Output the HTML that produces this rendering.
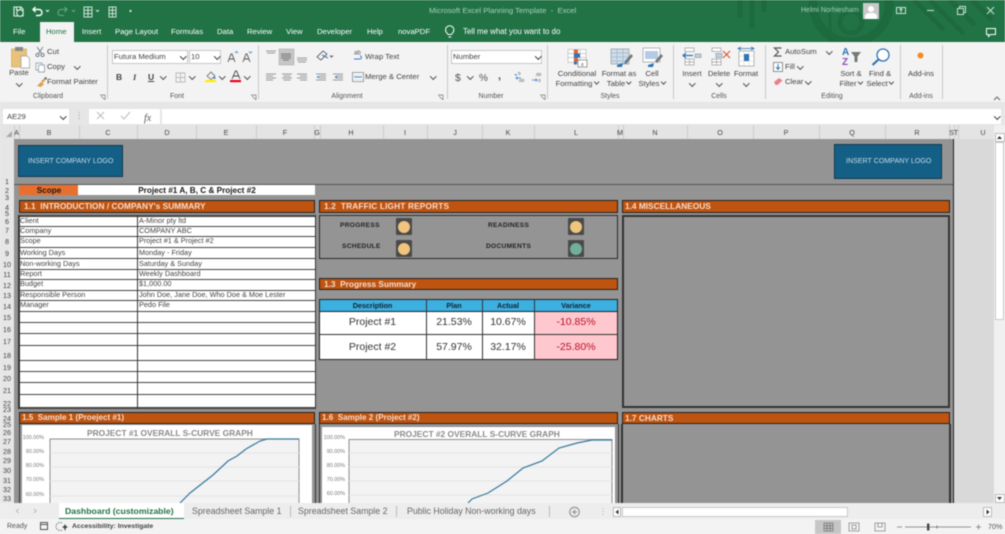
<!DOCTYPE html>
<html><head><meta charset="utf-8"><title>Microsoft Excel Planning Template - Excel</title>
<style>
html,body{margin:0;padding:0}
body{width:1005px;height:534px;overflow:hidden;position:relative;background:#f3f3f3;font-family:"Liberation Sans",sans-serif;filter:blur(.4px)}
div,svg{position:absolute}
.t{position:absolute;white-space:nowrap;font-size:7.7px;line-height:10px;color:#444}
.c{transform:translateX(-50%)}
.w{color:#fff}
.g{font-size:7px;color:#555}
.sep{width:1px;top:45px;height:54px;background:#c9c9c9}
.ch{position:absolute;font-size:0;width:3.500px;height:3.500px;border-right:1px solid #555;border-bottom:1px solid #555;transform:rotate(45deg)}
.ci{display:inline-block;width:3px;height:3px;border-right:.8px solid #555;border-bottom:.8px solid #555;transform:rotate(45deg);margin:0 0 2px 2px}
.col{top:125px;height:14px;width:1px;background:#ccc}
.cl{position:absolute;top:128px;font-size:7.2px;line-height:9px;color:#444;transform:translateX(-50%)}
.rl{position:absolute;left:0;width:14px;text-align:center;font-size:7.2px;line-height:9px;color:#444}
.bar{background:#bf5310;border:1px solid #222;box-sizing:border-box;color:#f5ddcb;font-weight:bold;font-size:8.3px;line-height:10px;white-space:nowrap}
.hl{left:19px;width:296px;height:1px;background:#444}
.cell{position:absolute;white-space:nowrap;font-size:7.3px;line-height:10px;color:#444}
.lab{position:absolute;white-space:nowrap;font-size:6.6px;font-weight:bold;line-height:8px;color:#222;letter-spacing:.3px}
.lt{width:16px;height:17px;background:#4a4a4a;border-radius:1px}
.lt i{position:absolute;left:2px;top:2.5px;width:12px;height:12px;border-radius:50%;background:#eec47e}
.tt{position:absolute;white-space:nowrap;text-align:center;font-size:10.5px;line-height:12px;color:#333}
.ttc{position:absolute;white-space:nowrap;font-weight:bold;font-size:7.2px;line-height:9px;color:#123;text-align:center}
.yl{position:absolute;font-size:5.4px;line-height:7px;color:#777;text-align:right;white-space:nowrap}
.ct{position:absolute;white-space:nowrap;font-weight:bold;font-size:8.4px;line-height:10px;color:#8a8a8a}
.tab{position:absolute;top:505px;font-size:8.8px;line-height:12px;color:#666;white-space:nowrap}
</style></head><body>

<!-- title bar -->
<div style="left:0;top:0;width:1005px;height:42px;background:#217346"></div>
<svg style="left:0;top:0" width="1005" height="42" viewBox="0 0 1005 42" fill="none">
<g stroke="#1d6a3f" stroke-width="5">
<circle cx="851" cy="4" r="38" stroke-width="9"/>
<circle cx="851" cy="22" r="11" stroke-width="5"/>
<path d="M740 0v18M752 0v28M764 0v12M914 0l30 30M930 0l34 34M950 0l25 25M972 0l20 20"/>
<path d="M830 8v34M816 0v14" stroke-width="3"/>
</g>
<g stroke="#e6efe9" stroke-width="1.1" fill="none">
<path d="M14 7h7l2 2v7h-9zM16.500 7v3h4V7"/><circle cx="20" cy="13" r="3.300" fill="#217346"/>
<path d="M33 9.500h6a3 3 0 0 1 0 6h-3M35.500 7l-2.500 2.500 2.500 2.500" stroke="#fff" stroke-width="1.400"/>
<path d="M46 10l1.500 1.500L49 10"/>
</g>
<g stroke="#6ba584" stroke-width="1.1" fill="none">
<path d="M67 9.500h-6a3 3 0 0 0 0 6h3M64.500 7l2.500 2.500L64.500 12"/>
<path d="M72 10l1.500 1.500L75 10"/>
</g>
<g stroke="#cfe2d7" stroke-width="1" fill="none">
<path d="M84 7h8v10h-8zM84 10.300h8M84 13.600h8M88 7v10"/>
<path d="M96 10l1.500 1.500L99 10"/>
<path d="M109 7h7v10h-7zM109 10.300h7M109 13.600h7M112.500 7v10"/>
</g>
<rect x="129.500" y="10" width="2" height="2" fill="#cfe2d7"/>
<g stroke="#fff" stroke-width="1" fill="none"><path d="M448 34.500c-1-1.500-2.500-2.500-2.500-4.500a4.200 4.200 0 0 1 8.400 0c0 2-1.500 3-2.500 4.500zM448.500 37h2.800"/></g>
<g stroke="#c8dfd1" stroke-width="1" fill="none">
<rect x="896.500" y="7.500" width="9" height="6"/><path d="M901 12.500v-4M899.500 10l1.500-1.500 1.500 1.500"/>
<path d="M927 10.500h7"/>
<rect x="957.500" y="8.500" width="6" height="6"/><path d="M959.500 8.500v-2h6v6h-2"/>
<path d="M987 7l7 7M994 7l-7 7"/>
<path d="M986.500 28.500h9v6h-5l-2 2v-2h-2z" stroke="#fff"/>
</g>
</svg>
<div class="t" style="left:429px;top:6px;color:#a9cfb9">Microsoft Excel Planning Template &nbsp;-&nbsp; Excel</div>
<div class="t" style="left:801px;top:6px;color:#a9cfb9;font-size:7px">Helmi Norhiesham</div>
<div style="left:863px;top:3px;width:16px;height:16px;background:#c9c9c9;overflow:hidden">
 <div style="left:5px;top:3px;width:6px;height:6px;border-radius:50%;background:#fff"></div>
 <div style="left:2px;top:10px;width:12px;height:7px;border-radius:4px 4px 0 0;background:#fff"></div>
</div>

<!-- tabs -->
<div style="left:40px;top:22px;width:34px;height:21px;background:#f3f3f3"></div>
<div class="t w" style="left:13px;top:27px">File</div>
<div class="t" style="left:46px;top:27px;color:#217346">Home</div>
<div class="t w" style="left:82px;top:27px">Insert</div>
<div class="t w" style="left:115px;top:27px">Page Layout</div>
<div class="t w" style="left:171px;top:27px">Formulas</div>
<div class="t w" style="left:217px;top:27px">Data</div>
<div class="t w" style="left:247px;top:27px">Review</div>
<div class="t w" style="left:286px;top:27px">View</div>
<div class="t w" style="left:317px;top:27px">Developer</div>
<div class="t w" style="left:367px;top:27px">Help</div>
<div class="t w" style="left:398px;top:27px">novaPDF</div>
<div class="t w" style="left:463px;top:27px;font-size:7.9px">Tell me what you want to do</div>

<!-- ribbon -->
<div style="left:0;top:42px;width:1005px;height:60px;background:#f3f3f3"></div>
<div class="sep" style="left:107px"></div><div class="sep" style="left:258px"></div><div class="sep" style="left:447px"></div><div class="sep" style="left:547px"></div><div class="sep" style="left:673px"></div><div class="sep" style="left:765px"></div><div class="sep" style="left:900px"></div><div class="sep" style="left:942px"></div>

<svg style="left:0;top:42px" width="1005" height="60" viewBox="0 42 1005 60" fill="none">
<rect x="11.500" y="49" width="15" height="18" fill="#e8c27a" stroke="#c9a45e" stroke-width=".6"/><rect x="15" y="47" width="8" height="4" fill="#888"/>
<path d="M21 56h6l2.500 2.500V68H21z" fill="#fff" stroke="#999" stroke-width=".7"/>
<g stroke="#6a7a8a" stroke-width=".9"><path d="M37 47l5 7M43 47l-5 7"/><circle cx="37.500" cy="55" r="1.600"/><circle cx="42.500" cy="55" r="1.600"/></g>
<g stroke="#8a97a5" stroke-width=".8" fill="#fff"><rect x="36" y="63" width="6" height="7"/><rect x="38.500" y="65" width="6" height="7"/></g>
<path d="M37 86l4-4 3 2-3 3zM41 81l4-3 1 1-3 4z" fill="#d9a24c"/><path d="M44 78l2-1 1 1-1 2z" fill="#666"/>
<path d="M228 62l3-8h1l3 8M229.500 59h4" stroke="#555" stroke-width=".9"/><path d="M235 53l1.500-1.500L238 53" stroke="#2f7ed0" stroke-width=".8"/>
<path d="M243 62l3-8h1l3 8M244.500 59h4" stroke="#555" stroke-width=".9"/><path d="M249 51.500l1.500 1.500 1.500-1.500" stroke="#2f7ed0" stroke-width=".8"/>
<g stroke="#bbb" stroke-width=".9"><path d="M176 73h9v9h-9zM180.500 73v9M176 77.500h9"/></g>
<path d="M207 76l4-4 4 4-4 3.500z" fill="#eee" stroke="#666" stroke-width=".8"/><circle cx="214.500" cy="78" r="1" fill="#2e75b6"/>
<rect x="205" y="80" width="11" height="2.200" fill="#ffee00"/>
<path d="M232 79l3.500-8h1L240 79M233.500 76h5" stroke="#444" stroke-width=".9"/><rect x="230" y="80" width="11" height="2.200" fill="#e8001c"/>
<rect x="279" y="49" width="15" height="16" fill="#c6c6c6" stroke="#b0b0b0" stroke-width=".6"/>
<g stroke="#999" stroke-width="1">
<path d="M266 51h10M267 53h8"/>
<path d="M281 54h10M281 56h10M281 58h10M283 60h6" stroke="#777"/>
<path d="M297 58h10M297 60h10M298 62h8"/>
<path d="M266 74h10M266 76h7M266 78h10M266 80h7"/>
<path d="M282 74h10M283.500 76h7M282 78h10M283.500 80h7"/>
<path d="M297 74h10M300 76h7M297 78h10M300 80h7"/>
<path d="M316 74h10M319 76h7M319 78h7M316 80h10M333 74h10M336 76h7M336 78h7M333 80h10"/>
</g>
<path d="M317 77h2M335 77h2" stroke="#2f7ed0" stroke-width="1.400"/>
<path d="M317 57l6-6 4 3-6 6z" stroke="#666" stroke-width=".9"/><path d="M322 55l6 3" stroke="#2f7ed0"/>
<path d="M330 55.500l1.500 1.500 1.500-1.500" stroke="#555"/>
<path d="M354 59h6a1.500 1.500 0 0 0 0-3" stroke="#2f7ed0" stroke-width=".9"/>
<text x="354" y="54.500" font-family="Liberation Sans" font-size="6" fill="#555">ab</text>
<rect x="352.500" y="72.500" width="11" height="9" stroke="#888" stroke-width=".8" fill="#fff"/><path d="M354 77h8" stroke="#2f7ed0"/><path d="M352.500 75h11M352.500 79.500h11" stroke="#bbb" stroke-width=".6"/>
<text x="455" y="81" font-family="Liberation Sans" font-size="10.500" fill="#555">$</text>
<text x="479" y="81" font-family="Liberation Sans" font-size="10" fill="#555">%</text>
<text x="498" y="79" font-family="Liberation Sans" font-size="11" font-weight="bold" fill="#555">,</text>
<rect x="515" y="74" width="1.500" height="1.500" fill="#2f7ed0"/><path d="M516 78h5M517.500 76.500L516 78l1.500 1.500" stroke="#2f7ed0" stroke-width=".7"/>
<text x="518" y="75" font-family="Liberation Sans" font-size="4.500" fill="#555">0</text><text x="518" y="82" font-family="Liberation Sans" font-size="4.500" fill="#555">.00</text>
<path d="M532 80h5M535.500 78.500L537 80l-1.500 1.500" stroke="#2f7ed0" stroke-width=".7"/>
<text x="535" y="76" font-family="Liberation Sans" font-size="4.500" fill="#555">.00</text><text x="537" y="82" font-family="Liberation Sans" font-size="4.500" fill="#555">.0</text>
<path d="M568 49.500h18v13h-18zM568 53.500h18M568 57.500h18M574 49.500v13M580 49.500v13" stroke="#bbb" stroke-width=".7" fill="#fff"/>
<rect x="574" y="49.500" width="4" height="4" fill="#d9663a"/><rect x="574" y="53.500" width="6" height="4" fill="#2e75b6"/><rect x="574" y="57.500" width="4" height="4" fill="#d9663a"/><rect x="574" y="61.500" width="3" height="3" fill="#2e75b6"/>
<rect x="578" y="60" width="9" height="7" fill="#fff" stroke="#777" stroke-width=".7"/>
<text x="581" y="66" font-family="Liberation Serif" font-style="italic" font-size="6" fill="#444">x</text>
<path d="M611 49h18v15h-18z" fill="#cfdcee" stroke="#999" stroke-width=".7"/>
<path d="M611 53h18M611 57h18M611 61h18M617 49v15M623 49v15" stroke="#8aa" stroke-width=".5"/>
<path d="M617 65l6-2-1 4h-5zM624 63l7-8 1 1-6 8z" fill="#2e75b6"/><path d="M625 61l6-7 2 2-6 7z" fill="#777"/>
<rect x="643" y="48" width="17" height="14" fill="#fff" stroke="#999" stroke-width=".7"/><rect x="645" y="51" width="13" height="8" fill="#b4cbe6"/>
<path d="M648 65l6-2-1 4h-5z" fill="#2e75b6"/><path d="M655 61l6-7 2 2-6 7z" fill="#777"/>
<g stroke="#999" stroke-width=".7" fill="#fff">
<rect x="685" y="48" width="9" height="3.500"/><rect x="685" y="59" width="9" height="6"/><path d="M689.500 59v6M685 62h9"/>
<rect x="695" y="54" width="6" height="3.500" fill="#bcd2e8"/>
<rect x="712" y="48" width="9" height="3.500"/><rect x="712" y="59" width="9" height="6"/><path d="M716.500 59v6M712 62h9"/>
<rect x="716" y="53.500" width="6" height="4" fill="#bcd2e8"/>
</g>
<path d="M683 55.500h10M686 53l-3 2.500 3 2.500" stroke="#2e75b6" stroke-width="1.200"/>
<path d="M723 51l7 7M730 51l-7 7" stroke="#d8532f" stroke-width="1.100"/>
<rect x="739" y="51" width="15" height="15" fill="#fff" stroke="#999" stroke-width=".7"/><path d="M739 56h15M739 61h15M744 51v15M749 51v15" stroke="#ccc" stroke-width=".5"/><rect x="744" y="54" width="5" height="7" fill="#2e75b6"/>
<path d="M738 48.500h16M741 47l-3 1.500 3 1.500M751 47l3 1.500-3 1.500" stroke="#2e75b6" stroke-width=".8"/>
<path d="M781.500 48h-7l4 4-4 4h7" stroke="#555" stroke-width="1.200"/>
<rect x="773.500" y="62.500" width="9" height="9" fill="#fff" stroke="#777" stroke-width=".8"/><path d="M778 64v5M776 67l2 2.500 2-2.500" stroke="#2e75b6"/>
<path d="M774 82l5-4 3.500 2.500-5 4.500h-2z" fill="#ec7f8d"/>
<text x="842" y="55" font-family="Liberation Sans" font-size="10" font-weight="bold" fill="#2e75b6">A</text>
<text x="842" y="65" font-family="Liberation Sans" font-size="10" font-weight="bold" fill="#8a4fb8">Z</text>
<path d="M851 52h10l-3.500 4.500V62h-3v-5.500z" fill="#777"/>
<circle cx="883" cy="55" r="6" stroke="#2e75b6" stroke-width="1.300" fill="#fff"/><path d="M878.500 59.500L872.500 65" stroke="#2e75b6" stroke-width="2.200"/>
<circle cx="920.500" cy="55.500" r="3" fill="#f58a1f"/>
<path d="M994 100l3-3 3 3" stroke="#666"/>
<g stroke="#777" stroke-width=".7"><path d="M100 95h5v5M101 96l3.500 3.500M251 95h5v5M252 96l3.500 3.500M438 95h5v5M439 96l3.500 3.500M540 95h5v5M541 96l3.500 3.500"/></g>
</svg>

<div class="t c" style="left:19px;top:68px">Paste</div>
<div class="ch" style="left:17px;top:81px"></div>
<div class="t" style="left:47px;top:47px">Cut</div>
<div class="t" style="left:47px;top:62px">Copy</div>
<div class="ch" style="left:75px;top:64px"></div>
<div class="t" style="left:47px;top:77px">Format Painter</div>
<div class="t g c" style="left:48px;top:92px">Clipboard</div>

<div style="left:112px;top:50px;width:76px;height:14px;background:#fff;border:1px solid #c6c6c6;box-sizing:border-box"></div>
<div class="t" style="left:114px;top:52px">Futura Medium</div><div class="ch" style="left:181px;top:54px;border-color:#444"></div>
<div style="left:189px;top:50px;width:32px;height:14px;background:#fff;border:1px solid #c6c6c6;box-sizing:border-box"></div>
<div class="t" style="left:191px;top:52px">10</div><div class="ch" style="left:215px;top:54px;border-color:#444"></div>
<div class="t" style="left:116px;top:72px;font-weight:bold;font-size:8.5px">B</div>
<div class="t" style="left:133px;top:72px;font-style:italic;font-weight:bold;font-size:8.5px;font-family:'Liberation Serif'">I</div>
<div class="t" style="left:148px;top:72px;text-decoration:underline;font-weight:bold;font-size:8.5px">U</div>
<div class="ch" style="left:161px;top:74px"></div><div class="ch" style="left:190px;top:74px"></div><div class="ch" style="left:220px;top:74px"></div><div class="ch" style="left:245px;top:74px"></div>
<div class="t g c" style="left:177px;top:92px">Font</div>

<div class="t" style="left:365px;top:52px">Wrap Text</div>
<div class="t" style="left:365px;top:72px">Merge &amp; Center</div><div class="ch" style="left:431px;top:74px"></div>
<div class="t g c" style="left:347px;top:92px">Alignment</div>

<div style="left:451px;top:50px;width:91px;height:14px;background:#fff;border:1px solid #c6c6c6;box-sizing:border-box"></div>
<div class="t" style="left:453px;top:52px">Number</div><div class="ch" style="left:536px;top:54px;border-color:#444"></div>
<div class="ch" style="left:468px;top:74px"></div>
<div class="t g c" style="left:491px;top:92px">Number</div>

<div class="t c" style="left:577px;top:69px">Conditional</div><div class="t c" style="left:577px;top:79px">Formatting<span class="ci"></span></div>
<div class="t c" style="left:619px;top:69px">Format as</div><div class="t c" style="left:619px;top:79px">Table<span class="ci"></span></div>
<div class="t c" style="left:652px;top:69px">Cell</div><div class="t c" style="left:652px;top:79px">Styles<span class="ci"></span></div>
<div class="t g c" style="left:610px;top:92px">Styles</div>

<div class="t c" style="left:692px;top:69px">Insert</div><div class="ch" style="left:690px;top:81px"></div>
<div class="t c" style="left:719px;top:69px">Delete</div><div class="ch" style="left:717px;top:81px"></div>
<div class="t c" style="left:746px;top:69px">Format</div><div class="ch" style="left:744px;top:81px"></div>
<div class="t g c" style="left:719px;top:92px">Cells</div>

<div class="t" style="left:785px;top:47px">AutoSum</div><div class="ch" style="left:827px;top:49px"></div>
<div class="t" style="left:785px;top:62px">Fill</div><div class="ch" style="left:798px;top:64px"></div>
<div class="t" style="left:785px;top:77px">Clear</div><div class="ch" style="left:806px;top:79px"></div>
<div class="t c" style="left:851px;top:69px">Sort &amp;</div><div class="t c" style="left:851px;top:79px">Filter<span class="ci"></span></div>
<div class="t c" style="left:880px;top:69px">Find &amp;</div><div class="t c" style="left:880px;top:79px">Select<span class="ci"></span></div>
<div class="t g c" style="left:832px;top:92px">Editing</div>
<div class="t c" style="left:921px;top:69px">Add-ins</div>
<div class="t g c" style="left:921px;top:92px">Add-ins</div>

<!-- formula bar -->
<div style="left:0;top:102px;width:1005px;height:23px;background:#e6e6e6"></div>
<div style="left:3px;top:109px;width:66px;height:15px;background:#fff"></div>
<div class="t" style="left:7px;top:112px;color:#444">AE29</div><div class="ch" style="left:61px;top:114px;border-color:#444"></div>
<div style="left:89px;top:109px;width:71px;height:15px;background:#fff"></div>
<div style="left:162px;top:109px;width:839px;height:15px;background:#fff"></div>
<svg style="left:70px;top:105px" width="90" height="20" viewBox="70 105 90 20" fill="none">
<path d="M79 112v1M79 115v1M79 118v1" stroke="#999"/>
<path d="M97 112l7 7M104 112l-7 7" stroke="#bbb"/>
<path d="M121 116l3 3 6-7" stroke="#bbb"/>
<text x="144" y="121" font-family="Liberation Serif" font-style="italic" font-size="10" fill="#555">fx</text>
</svg>
<div class="ch" style="left:995px;top:114px;border-color:#444"></div>

<!-- column header -->
<div style="left:0;top:125px;width:1005px;height:14px;background:#e4e4e4"></div>
<svg style="left:6px;top:131px" width="7" height="7"><path d="M6 0v6H0z" fill="#aaa"/></svg>
<div class="col" style="left:14px"></div><div class="col" style="left:19px"></div><div class="col" style="left:79px"></div><div class="col" style="left:137px"></div><div class="col" style="left:196px"></div><div class="col" style="left:256px"></div><div class="col" style="left:314px"></div><div class="col" style="left:320px"></div><div class="col" style="left:383px"></div><div class="col" style="left:427px"></div><div class="col" style="left:482px"></div><div class="col" style="left:534px"></div><div class="col" style="left:618px"></div><div class="col" style="left:623px"></div><div class="col" style="left:687px"></div><div class="col" style="left:753px"></div><div class="col" style="left:819px"></div><div class="col" style="left:885px"></div><div class="col" style="left:949px"></div><div class="col" style="left:954px"></div><div class="col" style="left:958px"></div>
<div class="cl" style="left:16.500px">A</div><div class="cl" style="left:49px">B</div><div class="cl" style="left:108px">C</div><div class="cl" style="left:167px">D</div><div class="cl" style="left:226px">E</div><div class="cl" style="left:285px">F</div><div class="cl" style="left:317px">G</div><div class="cl" style="left:351px">H</div><div class="cl" style="left:405px">I</div><div class="cl" style="left:455px">J</div><div class="cl" style="left:508px">K</div><div class="cl" style="left:576px">L</div><div class="cl" style="left:620px">M</div><div class="cl" style="left:655px">N</div><div class="cl" style="left:720px">O</div><div class="cl" style="left:786px">P</div><div class="cl" style="left:852px">Q</div><div class="cl" style="left:917px">R</div><div class="cl" style="left:951.500px">S</div><div class="cl" style="left:956px">T</div><div class="cl" style="left:983px">U</div>

<!-- row header -->
<div style="left:0;top:139px;width:14px;height:364px;background:#e6e6e6"></div>
<div class="rl" style="top:177px">1</div><div class="rl" style="top:186px">2</div><div class="rl" style="top:193px">3</div><div class="rl" style="top:203px">4</div><div class="rl" style="top:209px">5</div><div class="rl" style="top:217px">6</div><div class="rl" style="top:226px">7</div><div class="rl" style="top:237px">8</div><div class="rl" style="top:249px">9</div><div class="rl" style="top:260px">10</div><div class="rl" style="top:270px">11</div><div class="rl" style="top:281px">12</div><div class="rl" style="top:291px">13</div><div class="rl" style="top:302px">14</div><div class="rl" style="top:313px">15</div><div class="rl" style="top:325px">16</div><div class="rl" style="top:337px">17</div><div class="rl" style="top:351px">18</div><div class="rl" style="top:363px">19</div><div class="rl" style="top:374px">20</div><div class="rl" style="top:386px">21</div><div class="rl" style="top:399px">22</div><div class="rl" style="top:405px">23</div><div class="rl" style="top:414px">24</div><div class="rl" style="top:420px">25</div><div class="rl" style="top:428px">26</div><div class="rl" style="top:437px">27</div><div class="rl" style="top:447px">28</div><div class="rl" style="top:456px">29</div><div class="rl" style="top:466px">30</div><div class="rl" style="top:476px">31</div><div class="rl" style="top:485px">32</div><div class="rl" style="top:494px">33</div>

<!-- sheet -->
<div style="left:14px;top:139px;width:939px;height:364px;background:#949494"></div>
<div style="left:953px;top:139px;width:1px;height:364px;background:#222"></div>
<div style="left:954px;top:139px;width:40px;height:364px;background:#d9d9d9"></div>
<div style="left:14px;top:184px;width:939px;height:1px;background:#555"></div>

<div style="left:18px;top:145px;width:105px;height:32px;background:#145f86;border:1px solid #0e3a50;box-sizing:border-box"></div>
<div class="t" style="left:28px;top:156px;color:#c5dbe6;font-size:7.1px">INSERT COMPANY LOGO</div>
<div style="left:834px;top:144px;width:108px;height:35px;background:#145f86;border:1px solid #0e3a50;box-sizing:border-box"></div>
<div class="t" style="left:846px;top:156px;color:#c5dbe6;font-size:7.1px">INSERT COMPANY LOGO</div>

<div style="left:19px;top:185px;width:59px;height:10px;background:#e96f2e"></div>
<div style="left:78px;top:185px;width:237px;height:10px;background:#fff"></div>
<div class="t c" style="left:49px;top:185.500px;font-weight:bold;font-size:8.2px;color:#1a1a1a">Scope</div>
<div class="t c" style="left:197px;top:185.500px;font-weight:bold;font-size:8.2px;color:#1a1a1a">Project #1 A, B, C &amp; Project #2</div>

<div class="bar" style="left:19px;top:200px;width:296px;height:13px;padding-left:4px;font-size:8.4px">1.1 &nbsp;INTRODUCTION / COMPANY's SUMMARY</div>

<!-- intro table -->
<div style="left:19px;top:216px;width:296px;height:191px;background:#fff"></div>
<div class="hl" style="top:215px;height:2px"></div><div class="hl" style="top:226px"></div><div class="hl" style="top:236px"></div><div class="hl" style="top:247px"></div><div class="hl" style="top:258px"></div><div class="hl" style="top:269px"></div><div class="hl" style="top:279px"></div><div class="hl" style="top:290px"></div><div class="hl" style="top:300px"></div><div class="hl" style="top:311px"></div><div class="hl" style="top:322px"></div><div class="hl" style="top:333px"></div><div class="hl" style="top:345px"></div><div class="hl" style="top:360px"></div><div class="hl" style="top:371px"></div><div class="hl" style="top:382px"></div><div class="hl" style="top:394px"></div><div class="hl" style="top:407px;height:2px"></div>
<div style="left:18px;top:215px;width:1.500px;height:194px;background:#333"></div>
<div style="left:137px;top:215px;width:1px;height:194px;background:#333"></div>
<div style="left:314.500px;top:215px;width:1.500px;height:194px;background:#333"></div>
<div class="cell" style="left:20px;top:216px">Client</div><div class="cell" style="left:139px;top:216px">A-Minor pty ltd</div>
<div class="cell" style="left:20px;top:226px">Company</div><div class="cell" style="left:139px;top:226px">COMPANY ABC</div>
<div class="cell" style="left:20px;top:236px">Scope</div><div class="cell" style="left:139px;top:236px">Project #1 &amp; Project #2</div>
<div class="cell" style="left:20px;top:248px">Working Days</div><div class="cell" style="left:139px;top:248px">Monday - Friday</div>
<div class="cell" style="left:20px;top:259px">Non-working Days</div><div class="cell" style="left:139px;top:259px">Saturday &amp; Sunday</div>
<div class="cell" style="left:20px;top:269px">Report</div><div class="cell" style="left:139px;top:269px">Weekly Dashboard</div>
<div class="cell" style="left:20px;top:279px">Budget</div><div class="cell" style="left:139px;top:279px">$1,000.00</div>
<div class="cell" style="left:20px;top:290px">Responsible Person</div><div class="cell" style="left:139px;top:290px">John Doe, Jane Doe, Who Doe &amp; Moe Lester</div>
<div class="cell" style="left:20px;top:300px">Manager</div><div class="cell" style="left:139px;top:300px">Pedo File</div>

<!-- 1.5 -->
<div class="bar" style="left:19px;top:412px;width:296px;height:12px;padding-left:2px;font-size:8.1px">1.5 &nbsp;Sample 1 (Proeject #1)</div>
<div style="left:18.500px;top:424px;width:297px;height:79px;border-left:1px solid #333;border-right:1px solid #333;box-sizing:border-box"></div>
<div style="left:22px;top:425px;width:290px;height:78px;background:#fff"></div>
<div class="ct" style="left:87px;top:428px">PROJECT #1 OVERALL S-CURVE GRAPH</div>
<div class="yl" style="left:20px;width:24px;top:435px">100.00%</div><div class="yl" style="left:20px;width:24px;top:449px">90.00%</div><div class="yl" style="left:20px;width:24px;top:463px">80.00%</div><div class="yl" style="left:20px;width:24px;top:477px">70.00%</div><div class="yl" style="left:20px;width:24px;top:492px">60.00%</div>
<svg style="left:49px;top:438px" width="252" height="65" viewBox="49 438 252 65" fill="none">
<rect x="50" y="439" width="249" height="70" fill="#f3f3f3" stroke="#8e8e8e"/>
<path d="M50 453h249M50 467h249M50 481h249M50 496h249" stroke="#e3e3e3"/>
<path d="M180 503l10-10 23-18 15-14 9-5 9-7 14-8 7-2h32" stroke="#36789d" stroke-width="1.200"/>
</svg>

<!-- 1.2 -->
<div class="bar" style="left:319px;top:200px;width:299px;height:13px;padding-left:4px;letter-spacing:.15px">1.2 &nbsp;TRAFFIC LIGHT REPORTS</div>
<div style="left:319px;top:215px;width:299px;height:44px;border:1px solid #2a2a2a;box-sizing:border-box"></div>
<div class="lab" style="left:340px;top:222px">PROGRESS</div><div class="lab" style="left:342px;top:243px">SCHEDULE</div><div class="lab" style="left:488px;top:222px">READINESS</div><div class="lab" style="left:486px;top:243px">DOCUMENTS</div>
<div class="lt" style="left:396px;top:218px"><i></i></div><div class="lt" style="left:396px;top:240px"><i></i></div><div class="lt" style="left:568px;top:218px"><i></i></div><div class="lt" style="left:568px;top:240px"><i style="background:#72ae9c"></i></div>

<!-- 1.3 -->
<div class="bar" style="left:319px;top:278px;width:299px;height:12px;padding-left:4px">1.3 &nbsp;Progress Summary</div>
<div style="left:319px;top:299px;width:299px;height:61px;background:#fff;border:1px solid #222;box-sizing:border-box"></div>
<div style="left:320px;top:300px;width:297px;height:11px;background:#3cb0e0"></div>
<div style="left:534px;top:312px;width:83px;height:47px;background:#ffc7ce"></div>
<div style="left:319px;top:311px;width:299px;height:1px;background:#222"></div>
<div style="left:320px;top:334px;width:297px;height:1px;background:#333"></div>
<div style="left:426px;top:299px;width:1px;height:61px;background:#333"></div><div style="left:482px;top:299px;width:1px;height:61px;background:#333"></div><div style="left:534px;top:299px;width:1px;height:61px;background:#333"></div>
<div class="ttc" style="left:319px;width:107px;top:301px">Description</div><div class="ttc" style="left:426px;width:56px;top:301px">Plan</div><div class="ttc" style="left:482px;width:52px;top:301px">Actual</div><div class="ttc" style="left:534px;width:84px;top:301px">Variance</div>
<div class="tt" style="left:319px;width:107px;top:316px">Project #1</div><div class="tt" style="left:426px;width:56px;top:316px">21.53%</div><div class="tt" style="left:482px;width:52px;top:316px">10.67%</div><div class="tt" style="left:534px;width:84px;top:316px;color:#b8132a">-10.85%</div>
<div class="tt" style="left:319px;width:107px;top:341px">Project #2</div><div class="tt" style="left:426px;width:56px;top:341px">57.97%</div><div class="tt" style="left:482px;width:52px;top:341px">32.17%</div><div class="tt" style="left:534px;width:84px;top:341px;color:#b8132a">-25.80%</div>

<!-- 1.6 -->
<div class="bar" style="left:319px;top:412px;width:299px;height:12px;padding-left:2px;font-size:8.1px">1.6 &nbsp;Sample 2 (Project #2)</div>
<div style="left:318.500px;top:424px;width:300px;height:79px;border-left:1px solid #333;border-right:1px solid #333;box-sizing:border-box"></div>
<div style="left:322px;top:427px;width:293px;height:76px;background:#fff"></div>
<div class="ct" style="left:394px;top:429px">PROJECT #2 OVERALL S-CURVE GRAPH</div>
<div class="yl" style="left:321px;width:24px;top:435px">100.00%</div><div class="yl" style="left:321px;width:24px;top:449px">90.00%</div><div class="yl" style="left:321px;width:24px;top:463px">80.00%</div><div class="yl" style="left:321px;width:24px;top:477px">70.00%</div><div class="yl" style="left:321px;width:24px;top:491px">60.00%</div>
<svg style="left:348px;top:438px" width="266" height="65" viewBox="348 438 266 65" fill="none">
<rect x="349" y="439.500" width="263" height="70" fill="#f3f3f3" stroke="#8e8e8e"/>
<path d="M349 453h263M349 467h263M349 481h263M349 495h263" stroke="#e3e3e3"/>
<path d="M468 503l4-4 16-6 19-12 16-13 19-7 17-13 18-5 15-3h20" stroke="#36789d" stroke-width="1.200"/>
</svg>

<!-- 1.4 / 1.7 -->
<div class="bar" style="left:622px;top:200px;width:328px;height:13px;padding-left:2px">1.4 MISCELLANEOUS</div>
<div style="left:622px;top:215px;width:328px;height:193px;border:2px solid #333;box-sizing:border-box"></div>
<div class="bar" style="left:622px;top:412px;width:328px;height:12px;padding-left:2px">1.7 CHARTS</div>
<div style="left:621px;top:424px;width:330px;height:79px;border-left:2px solid #333;border-right:2px solid #333;box-sizing:border-box"></div>

<!-- vertical scrollbar -->
<div style="left:994px;top:125px;width:11px;height:378px;background:#f0f0f0"></div>
<div style="left:994.500px;top:133px;width:10px;height:9px;background:#fff;border:1px solid #bbb;box-sizing:border-box"></div>
<svg style="left:996px;top:135px" width="7" height="5"><path d="M3.500 1L6 4H1z" fill="#333"/></svg>
<div style="left:995px;top:142px;width:9px;height:178px;background:#fff;border:1px solid #c8c8c8;box-sizing:border-box"></div>
<div style="left:994.500px;top:494px;width:10px;height:9px;background:#fff;border:1px solid #bbb;box-sizing:border-box"></div>
<svg style="left:996px;top:496px" width="7" height="5"><path d="M1 1h5L3.500 4z" fill="#333"/></svg>

<!-- sheet tabs -->
<div style="left:0;top:503px;width:1005px;height:16px;background:#ededed"></div>
<div style="left:59px;top:503px;width:125px;height:16px;background:#fff;border-bottom:1px solid #217346;box-sizing:border-box"></div>
<svg style="left:10px;top:503px" width="30" height="16" fill="none"><path d="M8.500 6L6.500 8l2 2M24 6l2 2-2 2" stroke="#bbb"/></svg>
<div class="tab" style="left:65px;color:#217346;font-weight:bold;font-size:8.7px">Dashboard (customizable)</div>
<div class="tab" style="left:192px">Spreadsheet Sample 1</div>
<div class="tab" style="left:298px">Spreadsheet Sample 2</div>
<div class="tab" style="left:407px">Public Holiday Non-working days</div>
<div style="left:290px;top:506px;width:1px;height:11px;background:#bbb"></div><div style="left:396px;top:506px;width:1px;height:11px;background:#bbb"></div><div style="left:549px;top:506px;width:1px;height:11px;background:#bbb"></div>
<svg style="left:568px;top:505px" width="40" height="13" fill="none"><circle cx="6.500" cy="7" r="4.800" stroke="#888"/><path d="M4 7h5M6.500 4.500v5" stroke="#888"/><path d="M35 3v1M35 6v1M35 9v1" stroke="#aaa"/></svg>
<div style="left:613px;top:507px;width:8px;height:10px;background:#fff;border:1px solid #bbb;box-sizing:border-box"></div>
<svg style="left:614px;top:509px" width="6" height="6"><path d="M4.500 .5v5L1.500 3z" fill="#333"/></svg>
<div style="left:622px;top:507px;width:226px;height:10px;background:#fff;border:1px solid #c8c8c8;box-sizing:border-box"></div>
<div style="left:983px;top:507px;width:9px;height:10px;background:#fff;border:1px solid #bbb;box-sizing:border-box"></div>
<svg style="left:985px;top:509px" width="6" height="6"><path d="M1.500 .5v5L4.500 3z" fill="#333"/></svg>

<!-- status bar -->
<div style="left:0;top:519px;width:1005px;height:15px;background:#f3f3f3"></div>
<div class="t" style="left:7px;top:522px;font-size:7px;color:#555">Ready</div>
<svg style="left:38px;top:520px" width="40" height="13" fill="none"><rect x="2.500" y="2.500" width="7" height="7" stroke="#555"/><path d="M2.500 4.500h7" stroke="#555"/><path d="M24 3a4 4 0 1 0 0 7" stroke="#777" stroke-dasharray="1.500 1"/><path d="M27 4l1 2 2 1-2 1-1 3-1-3-2-1 2-1z" fill="#444"/></svg>
<div class="t" style="left:72px;top:522px;font-size:6.8px;font-weight:bold;color:#444">Accessibility: Investigate</div>
<div style="left:815px;top:520px;width:26px;height:14px;background:#c6c6c6"></div>
<svg style="left:820px;top:520px" width="180" height="14" fill="none">
<path d="M4 3h9v8H4zM4 5.700h9M4 8.300h9M7 3v8M10 3v8" stroke="#777" stroke-width=".8"/>
<path d="M29 3h10v8H29zM32 5h4v4h-4z" stroke="#888" stroke-width=".8"/>
<path d="M55 3h10v8H55zM58 3v4h4V3" stroke="#888" stroke-width=".8"/>
<path d="M77 7h5M85 7h66M156 7h5M158.500 4.500v5" stroke="#777" stroke-width=".8"/>
<rect x="107" y="3.500" width="2.400" height="7" fill="#444"/><path d="M117 5.500v3" stroke="#777"/>
</svg>
<div class="t" style="left:988px;top:522px;font-size:7.2px;color:#555">70%</div>
</body></html>
